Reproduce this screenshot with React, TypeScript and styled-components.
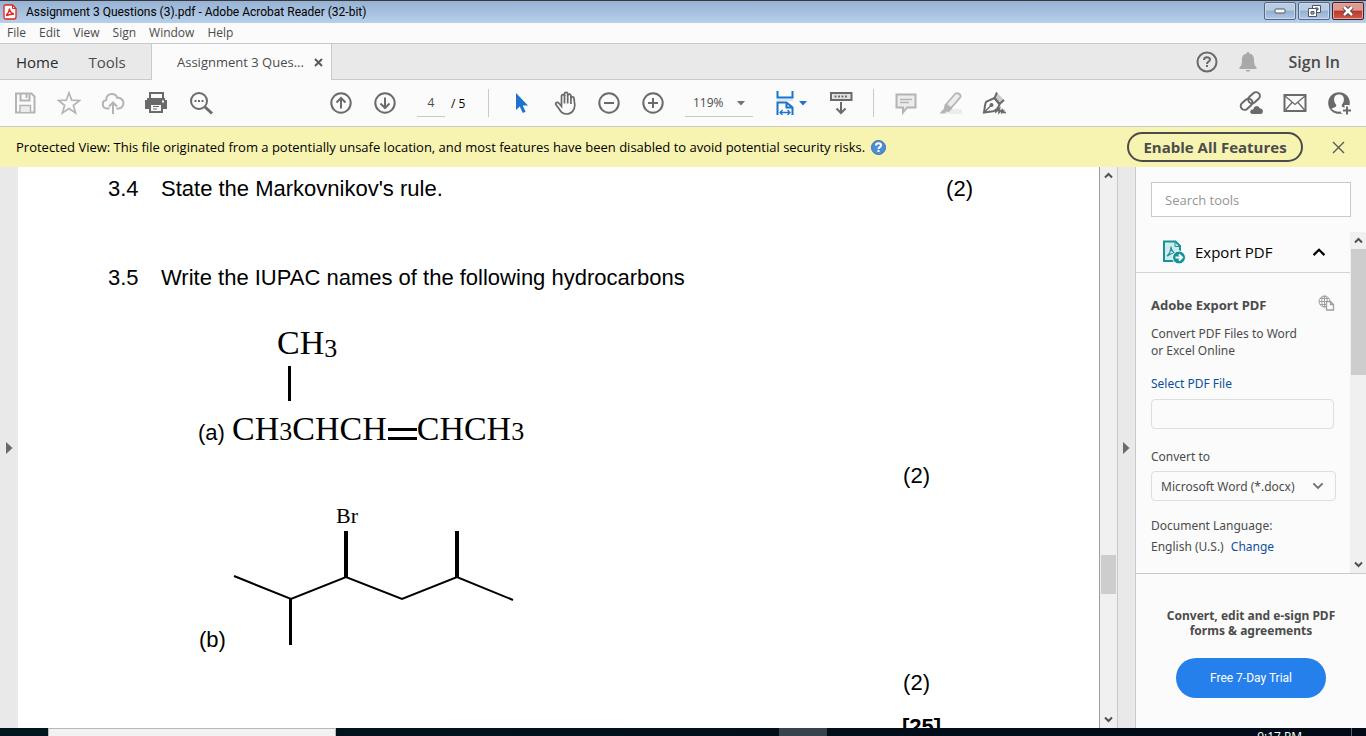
import React from "react";
import styled, { createGlobalStyle, css } from "styled-components";

const GlobalStyle = createGlobalStyle`
  *, *::before, *::after { box-sizing: border-box; }
  body { margin: 0; font-family: "Open Sans", "Noto Sans", sans-serif; font-size: 12px; color: #4b4b4b; background: #fbfbfb; }
  button, input, select { font: inherit; color: inherit; }
  button { border: 0; padding: 0; background: none; cursor: pointer; }
  svg { display: block; flex: none; }
  a { color: #0d4f9e; text-decoration: none; }
  h1, h2, p { margin: 0; font-size: inherit; font-weight: inherit; }
`;

const Window = styled.div`
  display: flex;
  flex-direction: column;
  height: 100vh;
  overflow: hidden;
`;

/* Title bar */
const TitleBar = styled.header`
  display: flex;
  flex: none;
  align-items: center;
  gap: 9px;
  height: 23px;
  padding: 0 2px 0 3px;
  border-top: 1px solid #37383c;
  background: linear-gradient(#97b2d3, #b6cfea);
  color: #000;
`;

const Title = styled.h1`
  flex: 1;
  font-family: Roboto, "Open Sans", sans-serif;
  line-height: 22px;
  white-space: nowrap;
`;

const CaptionButtons = styled.div`
  display: flex;
  align-self: flex-start;
  gap: 2px;
  padding-top: 1px;
`;

const CaptionButton = styled.button<{ $close?: boolean }>`
  display: grid;
  place-items: center;
  width: 32px;
  height: 18px;
  border: 1px solid ${(p) => (p.$close ? "#4c1a22" : "#55688a")};
  border-radius: 2px;
  box-shadow: inset 0 0 0 1px ${(p) => (p.$close ? "#e2a79f" : "#c9d9ec")};
  background: ${(p) =>
    p.$close
      ? "linear-gradient(#dd9a90 0 45%, #b8392a 50%, #c9604c)"
      : "linear-gradient(#b9cce4 0 45%, #94aecf 50%, #b1c8e4)"};
`;

/* Menu bar */
const MenuBar = styled.nav`
  display: flex;
  flex: none;
  gap: 13px;
  height: 20px;
  padding: 0 7px;
  line-height: 20px;
`;

/* Document tabs */
const TabBar = styled.div`
  display: flex;
  flex: none;
  height: 37px;
  border-top: 1px solid #c9c9c9;
  background: #e9e9e9;
`;

const TabGroup = styled.div`
  display: flex;
  align-items: center;
  gap: 30px;
  width: 151px;
  padding-left: 16px;
  border-bottom: 1px solid #c9c9c9;
  font-size: 15px;
`;

const TabLink = styled.button<{ $strong?: boolean }>`
  color: ${(p) => (p.$strong ? "#2c2c2c" : "#4b4b4b")};
`;

const DocumentTab = styled.div`
  display: flex;
  align-items: center;
  justify-content: space-between;
  width: 181px;
  padding: 0 8px 0 25px;
  border: solid #c9c9c9;
  border-width: 0 1px;
  background: #fbfbfb;
  font-size: 13px;
`;

const TabEnd = styled.div`
  display: flex;
  flex: 1;
  align-items: center;
  justify-content: flex-end;
  gap: 20px;
  padding-right: 26px;
  border-bottom: 1px solid #c9c9c9;
`;

const SignIn = styled.button`
  margin-left: 11px;
  font-size: 16px;
  font-weight: 600;
`;

/* Toolbar */
const Toolbar = styled.div`
  display: flex;
  flex: none;
  align-items: center;
  height: 47px;
  padding: 0 5px 0 3px;
  border-bottom: 1px solid #c8c8cc;
  color: #6a6a6a;
`;

const ToolButton = styled.button<{ $dim?: boolean; $wide?: boolean }>`
  display: flex;
  flex: none;
  align-items: center;
  justify-content: center;
  gap: 5px;
  width: ${(p) => (p.$wide ? 56 : 44)}px;
  height: 32px;
  color: ${(p) => (p.$dim ? "#b4b4b4" : "inherit")};
`;

const Gap = styled.div<{ $grow?: boolean }>`
  width: 96px;
  ${(p) => p.$grow && css`flex: 1;`}
`;

const Divider = styled.div`
  width: 1px;
  height: 28px;
  margin: 0 10px;
  background: #c9c9c9;
`;

const PageField = styled.label`
  display: flex;
  align-items: center;
  gap: 6px;
  width: 61px;
  margin-left: 10px;
  color: #000;
`;

const PageInput = styled.input`
  width: 28px;
  height: 28px;
  padding: 0;
  border: 0;
  border-bottom: 1px solid #c9c9c9;
  background: none;
  color: #4b4b4b;
  text-align: center;
`;

const ZoomField = styled.div`
  display: flex;
  position: relative;
  align-items: center;
  margin: 0 10px;
`;

const ZoomSelect = styled.select`
  width: 68px;
  height: 28px;
  padding: 0 8px;
  border: 0;
  border-bottom: 1px solid #c9c9c9;
  appearance: none;
  background: none;
  color: #4b4b4b;
`;

const SelectMark = styled.span<{ $right: number }>`
  position: absolute;
  right: ${(p) => p.$right}px;
  color: #707070;
  pointer-events: none;
`;

/* Protected view notice */
const Notice = styled.div`
  display: flex;
  flex: none;
  align-items: center;
  gap: 6px;
  height: 40px;
  padding: 0 20px 0 16px;
  background: #f7f3b1;
  color: #000;
  font-size: 13px;
`;

const EnableButton = styled.button`
  width: 176px;
  height: 30px;
  margin: 0 22px 0 auto;
  border: 2px solid #4b4b4b;
  border-radius: 15px;
  color: #4b4b4b;
  font-size: 15px;
  font-weight: 700;
  line-height: 20px;
`;

/* Work area */
const Workspace = styled.main`
  display: flex;
  flex: 1;
  min-height: 0;
`;

const PaneToggle = styled.button<{ $right?: boolean }>`
  display: grid;
  flex: none;
  place-items: center;
  width: 18px;
  background: #e9e9e9;
  ${(p) => p.$right && css`
    width: 19px;
    border: solid #c9c9c9;
    border-width: 0 1px;
  `}
`;

const Page = styled.article`
  flex: 1;
  min-width: 0;
  padding: 9px 126px 0 90px;
  overflow: hidden;
  background: #fff;
  color: #000;
  font: 22px/26px "Liberation Sans", Arial, sans-serif;
`;

const Question = styled.section`
  display: grid;
  grid-template-columns: 53px 1fr auto;
  margin-bottom: 63px;

  & + & { margin-bottom: 33px; }
`;

const Formula = styled.div`
  padding-left: 90px;
  font: 34px/38px "Liberation Serif", "Times New Roman", serif;
`;

const FormulaLine = styled.div<{ $indent?: boolean }>`
  display: flex;
  align-items: baseline;
  padding-left: ${(p) => (p.$indent ? 79 : 0)}px;
`;

const Count = styled.span<{ $sub?: boolean }>`
  font-size: 26px;
  line-height: 26px;
  ${(p) => p.$sub && css`
    position: relative;
    top: 3px;
  `}
`;

const SingleBond = styled.svg`
  margin: 4px 0 9px 89px;
`;

const PartLabel = styled.span`
  width: 34px;
  font: 22px/26px "Liberation Sans", Arial, sans-serif;
`;

const Marks = styled.p`
  margin: 15px 43px 11px 0;
  text-align: right;
`;

const Skeleton = styled.div`
  display: flex;
  align-items: flex-end;
  padding-left: 91px;
  margin-bottom: 17px;
`;

const Total = styled.p`
  margin: 18px 32px 0 0;
  font-weight: 700;
  text-align: right;
`;

/* Scroll bars */
const ScrollTrack = styled.div<{ $edge?: boolean }>`
  display: flex;
  flex: none;
  flex-direction: column;
  align-items: center;
  width: ${(p) => (p.$edge ? 18 : 16)}px;
  border-left: ${(p) => (p.$edge ? "1px solid #9c9c9c" : "0")};
  background: #f0f0f0;
  color: #505050;
`;

const ScrollSpace = styled.div<{ $share: number }>`
  flex: ${(p) => p.$share} 1 0;
`;

const ScrollThumb = styled.div<{ $size: number }>`
  flex: none;
  width: 15px;
  height: ${(p) => p.$size}px;
  background: #cdcdcd;
`;

const ScrollArrow = styled.button`
  display: grid;
  place-items: center;
  width: 15px;
  height: 17px;
`;

/* Tools pane */
const ToolsPane = styled.aside`
  display: flex;
  flex: none;
  flex-direction: column;
  width: 230px;
  background: #fbfbfb;
  font-family: "Noto Sans", "Open Sans", sans-serif;
`;

const SearchInput = styled.input`
  width: 200px;
  height: 35px;
  margin: 15px 15px 15px;
  padding: 0 13px;
  border: 1px solid #c9c9c9;
  background: #fff;
  font-family: "Open Sans", sans-serif;
  font-size: 13px;

  &::placeholder { color: #959595; opacity: 1; }
`;

const PaneScroll = styled.div`
  display: flex;
  flex: 1;
  min-height: 0;
`;

const PaneContent = styled.div`
  flex: 1;
  min-width: 0;
`;

const ToolHeader = styled.button`
  display: flex;
  align-items: center;
  gap: 9px;
  width: 100%;
  height: 41px;
  padding: 0 24px 0 26px;
  border-bottom: 1px solid #d3d3d3;
  color: #000;
  font-family: "Open Sans", sans-serif;
  font-size: 15px;
  text-align: left;

  span { flex: 1; }
`;

const ExportForm = styled.form`
  display: flex;
  flex-direction: column;
  padding: 22px 15px 0 15px;
  line-height: 17px;
`;

const FormHeading = styled.div`
  display: flex;
  justify-content: space-between;
  margin-bottom: 11px;

  h2 { padding-top: 2px; font-size: 13px; font-weight: 700; line-height: 17px; }
`;

const FileLabel = styled.label`
  margin: 16px 0 7px;
  color: #0d4f9e;
`;

const FileInput = styled.input`
  width: 183px;
  height: 30px;
  border: 1px solid #dedede;
  border-radius: 4px;
  background: none;
`;

const FormatLabel = styled.label`
  margin: 19px 0 6px;
`;

const FormatField = styled.div`
  display: flex;
  position: relative;
  align-items: center;
`;

const FormatSelect = styled.select`
  flex: none;
  width: 185px;
  height: 30px;
  padding: 0 9px;
  border: 1px solid #dedede;
  border-radius: 4px;
  appearance: none;
  background: none;
`;

const Language = styled.p`
  margin-top: 14px;
  line-height: 21px;

  a { margin-left: 4px; }
`;

const Promo = styled.div`
  display: flex;
  flex: none;
  flex-direction: column;
  align-items: center;
  gap: 20px;
  height: 155px;
  padding-top: 34px;
  border-top: 1px solid #c9c9c9;
  font-weight: 700;
  line-height: 15px;
  text-align: center;
`;

const TrialButton = styled.button`
  width: 150px;
  height: 40px;
  border-radius: 20px;
  background: #2680eb;
  color: #fff;
  font-family: Roboto, "Open Sans", sans-serif;
  font-weight: 400;
`;

/* Desktop task bar */
const TaskBar = styled.footer`
  display: flex;
  flex: none;
  height: 8px;
  overflow: hidden;
  background: linear-gradient(90deg, #00161f, #020a18);
`;

const TaskSearch = styled.div`
  width: 288px;
  margin-left: 48px;
  border: 1px solid #b8b8b8;
  border-bottom: 0;
  background: #f2f2f2;
`;

const TaskItem = styled.div`
  width: 48px;
  margin-left: 443px;
  background: #36424c;
`;

const Clock = styled.time`
  margin: 0 14px 0 auto;
  padding-right: 49px;
  border-right: 1px solid #5d636d;
  color: #fff;
  line-height: 18px;
`;

const Stroke = ({ size = 24, width = 2, children }: { size?: number; width?: number; children: React.ReactNode }) => (
  <svg width={size} height={size} viewBox="0 0 24 24" fill="none" stroke="currentColor" strokeWidth={width} aria-hidden="true">
    {children}
  </svg>
);

const Chevron = ({ up, size = 9, width = 2 }: { up?: boolean; size?: number; width?: number }) => (
  <svg width={size} height={size} viewBox="0 0 9 9" fill="none" stroke="currentColor" strokeWidth={width} aria-hidden="true">
    <path d={up ? "M1 6.5 4.5 3 8 6.5" : "M1 2.5 4.5 6 8 2.5"} />
  </svg>
);

const Caret = () => (
  <svg width="8" height="5" viewBox="0 0 8 5" fill="currentColor" aria-hidden="true">
    <path d="M0 0h8L4 4.5z" />
  </svg>
);

const PaneArrow = () => (
  <svg width="7" height="12" viewBox="0 0 7 12" fill="#6a6a6a" aria-hidden="true">
    <path d="M0 0 6.5 6 0 12z" />
  </svg>
);

const SaveIcon = () => (
  <Stroke>
    <path d="M3 2.5h15.5l3 3v16H3z" />
    <path d="M7.5 3v6.5h9V3" />
    <path d="M13.5 3v4" />
    <path fill="#ececec" strokeWidth="1.5" d="M7 21v-6.500h10.500V21" />
  </Stroke>
);

const StarIcon = () => (
  <Stroke width={1.7}>
    <path d="m12 1.800 2.700 7.400 7.900.300-6.200 4.900 2.200 7.600-6.600-4.400L5.400 22l2.200-7.600-6.200-4.900 7.900-.300z" />
  </Stroke>
);

const CloudUpIcon = () => (
  <Stroke>
    <path d="M8.500 17.500H5.800a4.300 4.300 0 0 1-.6-8.500C4.800 5.500 7.500 3 10.800 3c2.800 0 4.700 1.500 5.500 3.800a5.400 5.400 0 1 1 1.500 10.700h-2.500" />
    <path d="M12 23V11.500m-4 4 4-4 4 4" />
  </Stroke>
);

const PrintIcon = () => (
  <svg width="24" height="24" viewBox="0 0 24 24" aria-hidden="true">
    <path fill="none" stroke="#6a6a6a" strokeWidth="2" d="M5 8V2h13v6" />
    <path fill="#6a6a6a" d="M0 9h2V7h18v2h2v9h-4v4H4v-4H0z" />
    <path fill="#fbfbfb" d="M17 9.500h2v2h-2zM6 14h10v6H6z" />
    <path stroke="#6a6a6a" d="M8 15.500h6m-6 2.500h4" />
  </svg>
);

const FindIcon = () => (
  <Stroke>
    <circle cx="10" cy="10" r="8" />
    <path strokeWidth="3" d="m16 16 7 6.500" />
    <path strokeWidth="2" d="M5.500 10h2m1.500 0h2m1.500 0h2" />
  </Stroke>
);

const ArrowCircle = ({ down }: { down?: boolean }) => (
  <Stroke>
    <circle cx="12" cy="12" r="9.700" />
    {down ? <path d="M12 6.500v10.500M7.500 12.500 12 17l4.500-4.500" /> : <path d="M12 17.500V7m-4.500 4.500L12 7l4.500 4.500" />}
  </Stroke>
);

const SignCircle = ({ plus }: { plus?: boolean }) => (
  <Stroke>
    <circle cx="12" cy="12" r="9.700" />
    <path d={plus ? "M7 12h10M12 7v10" : "M7 12h10"} />
  </Stroke>
);

const PointerIcon = () => (
  <svg width="24" height="24" viewBox="0 0 24 24" fill="#1b73cd" aria-hidden="true">
    <path d="M7 2v17l3.800-3.600 3 6.600 2.800-1.300-2.900-6.200H19z" />
  </svg>
);

const HandIcon = () => (
  <Stroke width={1.7}>
    <path d="M7.500 12.500V5.300c0-2.300 3-2.300 3 0V3.200c0-2.400 3.200-2.400 3.200 0v1.600c0-2.300 3.200-2.300 3.200 0v2.600c0-2 3.100-2 3.100 0l.8 6.600c0 5-3 9-8.500 9-4 0-5.800-2.500-7.100-5L2 13.800c-1-2.200 1.500-3.500 3-1.500l2.500 3z" transform="translate(1)" />
    <path d="M11.500 4v8.500m3.200-8.500v8.500m3.200-7v7.500" />
  </Stroke>
);

const FitWidthIcon = () => (
  <svg width="18" height="24" viewBox="0 0 18 24" fill="none" stroke="#1b73cd" strokeWidth="2" aria-hidden="true">
    <path d="M1.500 0v6.500h15V0" />
    <path stroke="#d8e5f3" d="M1 9h16" />
    <path d="M1.500 24V11.500h9l6 5V24M10.500 11.500v5h6" />
    <path strokeWidth="1.300" d="M4 21.500h10M6.500 19 4 21.500 6.500 24m5-5 2.500 2.500-2.500 2.500" />
  </svg>
);

const KeyboardDownIcon = () => (
  <Stroke>
    <path fill="#e4e4e4" d="M2 2h20.500v7H2z" />
    <path strokeDasharray="2 1.500" d="M5.500 5.500h13.500" />
    <path d="M12 11v11m-4.500-4.500L12 22l4.500-4.500" />
  </Stroke>
);

const CommentIcon = () => (
  <Stroke>
    <path fill="#ececec" d="M2.500 3.500h19v13H13L9 21.500v-5H2.500z" />
    <path strokeWidth="1.300" d="M6 8.500h12M6 11.500h9" />
  </Stroke>
);

const HighlightIcon = () => (
  <Stroke width={1.700}>
    <path stroke="none" fill="#ececec" d="M7 18h17v5H7z" />
    <path fill="#ececec" d="M8 13.500 17 3c2-2 6 0 5.500 3L13 17z" />
    <path fill="#b4b4b4" d="m7.500 14 5.500 3.500-2 2.500H6z" />
    <path fill="#b4b4b4" stroke="none" d="M1.500 22.500 5 18.500l3 2.500-1.500 1.500z" />
  </Stroke>
);

const SignPenIcon = () => (
  <Stroke>
    <path d="M2 21.500C3 17 2.500 12.500 4.500 10.500L12.500 7l5 6c-1 4-3.500 6.500-6.500 7.200z" />
    <path strokeWidth="1.500" d="m2 21.500 7-7" />
    <path stroke="none" fill="#c9c9c9" d="m15 2 7 6.500-3.500 3.500-6-5.500z" />
    <path d="m15 1.500-2.500 5.500 5 6 4.500-4" />
    <circle cx="9.500" cy="14" r="1" />
    <path strokeWidth="1.700" d="m13 21.500 4.500-4-.5 4 3-2.500v2.500l1.500-1.500v1.500H24" />
  </Stroke>
);

const LinkCloudIcon = () => (
  <Stroke>
    <rect x="8.500" y="3" width="13" height="7.500" rx="3.700" transform="rotate(-42 15 6.700)" />
    <rect x="1" y="9.500" width="13" height="7.500" rx="3.700" transform="rotate(-42 7.500 13.200)" />
    <path stroke="#fbfbfb" strokeWidth="1" fill="#6a6a6a" d="M14 23.500c-4.500 0-4-5.500 0-5.500 1-4.500 6-4 7-1 4.500 0 4.500 6.500 0 6.500z" />
  </Stroke>
);

const MailIcon = () => (
  <Stroke>
    <path d="M1.500 4h21v16h-21z" />
    <path strokeWidth="1.300" d="m2 5 10 8.500L22 5M2 19.500l7-8m13 8-7-8" />
  </Stroke>
);

const PersonAddIcon = () => (
  <svg width="24" height="24" viewBox="0 0 24 24" aria-hidden="true">
    <circle cx="12" cy="12" r="9.800" fill="#6a6a6a" stroke="#6a6a6a" strokeWidth="2" />
    <path fill="#fbfbfb" d="M12 3.500c3.500 0 5 2.200 4.900 5.200-.1 2-.9 3.700-2.100 5v1.800l4.700 2.200c-4 4-11 4-15 0L9.200 15.500v-1.800C8 12.400 7.200 10.700 7.100 8.700 7 5.700 8.500 3.500 12 3.500z" />
    <path stroke="#fbfbfb" strokeWidth="5" d="M20 14v10m-6-4.500h10" />
    <path stroke="#6a6a6a" strokeWidth="2" d="M20 15.500v8m-4-4h8" />
  </svg>
);

const AcrobatIcon = () => (
  <svg width="14" height="16" viewBox="0 0 14 16" fill="none" stroke="#e2231a" aria-hidden="true">
    <path fill="#fff" strokeWidth="1.300" d="M2.500 1h7L13 4.500V13q0 2-2 2H3q-2 0-2-2V2.500Q1 1 2.500 1z" />
    <path d="M9.500 1v3.500H13" />
    <path strokeWidth="1.300" d="M6.500 4.500c-.3 3-1.500 5.500-3.500 7M6.500 5c.5 2.500 2 4.500 4.500 5-2.500 0-5 .500-7.500 1.700" />
  </svg>
);

const ExportIcon = () => (
  <svg width="24" height="24" viewBox="0 0 24 24" fill="none" stroke="#15939a" aria-hidden="true">
    <path fill="#d2eaeb" strokeWidth="2" d="M2 1.500h11.500l4.500 4.500v15H2z" />
    <path d="M13 2v4.500h4.500" />
    <path strokeWidth="1.200" d="M9 6.500c0 4-1.500 7.500-4 9.500M9 7c.5 4 2.500 6 5.500 6-4 0-6.500.500-9 3" />
    <circle cx="17" cy="17.500" r="6.500" fill="#15939a" stroke="#fbfbfb" />
    <path stroke="#fff" strokeWidth="2" d="M13.500 17.500h6m-2.500-3 3 3-3 3" />
  </svg>
);

const WebFileIcon = () => (
  <svg width="17" height="17" viewBox="0 0 17 17" fill="none" stroke="#a0a0a0" aria-hidden="true">
    <circle cx="6.500" cy="6.500" r="5.500" />
    <path d="M6.500 1v11M1 6.500h11M2 3.500h9M2 9.500h9" />
    <ellipse cx="6.500" cy="6.500" rx="2.800" ry="5.500" />
    <path fill="#fbfbfb" strokeWidth="1.300" d="M8.500 6.500h4l3 3v5.500h-7zM12.500 6.500v3h3" />
  </svg>
);

const MENUS = ["File", "Edit", "View", "Sign", "Window", "Help"];

export default function App() {
  return (
    <Window>
      <GlobalStyle />
      <TitleBar>
        <AcrobatIcon />
        <Title>Assignment 3 Questions (3).pdf - Adobe Acrobat Reader (32-bit)</Title>
        <CaptionButtons>
          <CaptionButton aria-label="Minimize">
            <svg width="12" height="6" viewBox="0 0 12 6"><rect x="1" y="1" width="10" height="4" rx="1" fill="#fff" stroke="#4e5462" /></svg>
          </CaptionButton>
          <CaptionButton aria-label="Restore">
            <svg width="13" height="12" viewBox="0 0 13 12" fill="none" stroke="#4e5462">
              <path fill="#fff" d="M4.500.500h8v7h-8z" />
              <path fill="#94aecf" d="M7 3h3v2H7z" />
              <path fill="#fff" d="M.5 3.500h8v8h-8z" />
              <path fill="#94aecf" d="M3 6.500h3v2.500H3z" />
            </svg>
          </CaptionButton>
          <CaptionButton $close aria-label="Close">
            <svg width="12" height="10" viewBox="0 0 12 10">
              <path stroke="#4e3b44" strokeWidth="4.500" d="m2 1 8 8m0-8L2 9" />
              <path stroke="#fff" strokeWidth="2.500" d="m2 1 8 8m0-8L2 9" />
            </svg>
          </CaptionButton>
        </CaptionButtons>
      </TitleBar>

      <MenuBar aria-label="Menu bar">
        {MENUS.map((menu) => <button key={menu}>{menu}</button>)}
      </MenuBar>

      <TabBar>
        <TabGroup>
          <TabLink $strong>Home</TabLink>
          <TabLink>Tools</TabLink>
        </TabGroup>
        <DocumentTab>
          <span>Assignment 3 Ques...</span>
          <button aria-label="Close tab">
            <svg width="9" height="9" viewBox="0 0 9 9" stroke="#5a5a5a" strokeWidth="2"><path d="m1 1 7 7m0-7L1 8" /></svg>
          </button>
        </DocumentTab>
        <TabEnd>
          <button aria-label="Help">
            <svg width="22" height="22" viewBox="0 0 22 22" fill="none" stroke="#6a6a6a" strokeWidth="2">
              <circle cx="11" cy="11" r="9.500" />
              <path d="M8 9c0-3.500 6-3.500 6-.5 0 2-3 2-3 4.500m0 1v2" />
            </svg>
          </button>
          <button aria-label="Notifications">
            <svg width="20" height="20" viewBox="0 0 20 20" fill="#a9a9a9">
              <path d="M9 0h2v1.500c3.500.5 5 3 5 6 0 4 .5 6 2.500 8V17h-17v-1.500c2-2 2.500-4 2.500-8 0-3 1.500-5.500 5-6zM7.500 18h5c-.5 2-4.500 2-5 0z" />
            </svg>
          </button>
          <SignIn>Sign In</SignIn>
        </TabEnd>
      </TabBar>

      <Toolbar>
        <ToolButton $dim aria-label="Save"><SaveIcon /></ToolButton>
        <ToolButton $dim aria-label="Star"><StarIcon /></ToolButton>
        <ToolButton $dim aria-label="Upload"><CloudUpIcon /></ToolButton>
        <ToolButton aria-label="Print"><PrintIcon /></ToolButton>
        <ToolButton aria-label="Find"><FindIcon /></ToolButton>
        <Gap />
        <ToolButton aria-label="Previous page"><ArrowCircle /></ToolButton>
        <ToolButton aria-label="Next page"><ArrowCircle down /></ToolButton>
        <PageField>
          <PageInput aria-label="Page number" defaultValue="4" />
          / 5
        </PageField>
        <Divider />
        <ToolButton aria-label="Select"><PointerIcon /></ToolButton>
        <ToolButton aria-label="Pan"><HandIcon /></ToolButton>
        <ToolButton aria-label="Zoom out"><SignCircle /></ToolButton>
        <ToolButton aria-label="Zoom in"><SignCircle plus /></ToolButton>
        <ZoomField>
          <ZoomSelect aria-label="Zoom level" defaultValue="119%"><option>119%</option></ZoomSelect>
          <SelectMark $right={8}><Caret /></SelectMark>
        </ZoomField>
        <ToolButton $wide aria-label="Fit width">
          <FitWidthIcon />
          <svg width="8" height="5" viewBox="0 0 8 5" fill="#1b73cd"><path d="M0 0h8L4 4.500z" /></svg>
        </ToolButton>
        <ToolButton aria-label="Scroll mode"><KeyboardDownIcon /></ToolButton>
        <Divider />
        <ToolButton $dim aria-label="Comment"><CommentIcon /></ToolButton>
        <ToolButton $dim aria-label="Highlight"><HighlightIcon /></ToolButton>
        <ToolButton aria-label="Sign"><SignPenIcon /></ToolButton>
        <Gap $grow />
        <ToolButton aria-label="Share link"><LinkCloudIcon /></ToolButton>
        <ToolButton aria-label="Email"><MailIcon /></ToolButton>
        <ToolButton aria-label="Add people"><PersonAddIcon /></ToolButton>
      </Toolbar>

      <Notice role="status">
        <span>
          Protected View: This file originated from a potentially unsafe location, and most features have been disabled to avoid potential security risks.
        </span>
        <button aria-label="About Protected View">
          <svg width="15" height="15" viewBox="0 0 15 15" fill="none">
            <circle cx="7.500" cy="7.500" r="7" fill="#4d8fd6" stroke="#3b6fb5" />
            <path stroke="#fff" strokeWidth="2" d="M5 5.500c0-3 5-3 5 0 0 1.700-2.500 1.500-2.500 3.500m0 1v2" />
          </svg>
        </button>
        <EnableButton>Enable All Features</EnableButton>
        <button aria-label="Dismiss">
          <svg width="15" height="15" viewBox="0 0 15 15" stroke="#5a5a5a" strokeWidth="1.400"><path d="m2 2 11 11m0-11L2 13" /></svg>
        </button>
      </Notice>

      <Workspace>
        <PaneToggle aria-label="Show navigation pane"><PaneArrow /></PaneToggle>
        <Page>
          <Question>
            <span>3.4</span>
            <span>State the Markovnikov's rule.</span>
            <span>(2)</span>
          </Question>
          <Question>
            <span>3.5</span>
            <span>Write the IUPAC names of the following hydrocarbons</span>
          </Question>

          <Formula>
            <FormulaLine $indent>CH<Count $sub>3</Count></FormulaLine>
            <SingleBond width="4" height="35" viewBox="0 0 4 35"><path stroke="#000" strokeWidth="3" d="M2.500 0v35" /></SingleBond>
            <FormulaLine>
              <PartLabel>(a)</PartLabel>
              CH<Count>3</Count>CHCH
              <svg width="30" height="12" viewBox="0 0 30 12"><path stroke="#000" strokeWidth="3" d="M1 1.500H30M1 10.500H30" /></svg>
              CHCH<Count>3</Count>
            </FormulaLine>
          </Formula>
          <Marks>(2)</Marks>

          <Skeleton>
            <PartLabel>(b)</PartLabel>
            <svg width="284" height="153" viewBox="0 0 284 153" fill="none" stroke="#000" role="img" aria-label="Skeletal formula with a bromine substituent">
              <text x="103" y="23" fill="#000" stroke="none" fontFamily="Liberation Serif, serif" fontSize="22">Br</text>
              <path strokeWidth="4" d="M113 31v46M224 31v46" />
              <path strokeWidth="3" d="M57.500 99v46" />
              <path strokeWidth="2" d="m1 76 57 23 55-22 56 22 55-22 56 23" />
            </svg>
          </Skeleton>
          <Marks>(2)</Marks>
          <Total>[25]</Total>
        </Page>

        <ScrollTrack $edge>
          <ScrollArrow aria-label="Scroll up"><Chevron up /></ScrollArrow>
          <ScrollSpace $share={371} />
          <ScrollThumb $size={39} />
          <ScrollSpace $share={117} />
          <ScrollArrow aria-label="Scroll down"><Chevron /></ScrollArrow>
        </ScrollTrack>
        <PaneToggle $right aria-label="Hide tools pane"><PaneArrow /></PaneToggle>

        <ToolsPane>
          <SearchInput type="text" placeholder="Search tools" aria-label="Search tools" />
          <PaneScroll>
            <PaneContent>
              <ToolHeader>
                <ExportIcon />
                <span>Export PDF</span>
                <Chevron up size={14} width={1.4} />
              </ToolHeader>
              <ExportForm>
                <FormHeading>
                  <h2>Adobe Export PDF</h2>
                  <WebFileIcon />
                </FormHeading>
                <p>Convert PDF Files to Word<br />or Excel Online</p>
                <FileLabel htmlFor="pdf-file">Select PDF File</FileLabel>
                <FileInput id="pdf-file" type="text" />
                <FormatLabel htmlFor="format">Convert to</FormatLabel>
                <FormatField>
                  <FormatSelect id="format" defaultValue="docx">
                    <option value="docx">Microsoft Word (*.docx)</option>
                  </FormatSelect>
                  <SelectMark $right={11}><Chevron size={12} width={1.4} /></SelectMark>
                </FormatField>
                <Language>
                  Document Language:<br />
                  English (U.S.) <a href="#language">Change</a>
                </Language>
              </ExportForm>
            </PaneContent>
            <ScrollTrack>
              <ScrollArrow aria-label="Scroll up"><Chevron up /></ScrollArrow>
              <ScrollThumb $size={126} />
              <ScrollSpace $share={1} />
              <ScrollArrow aria-label="Scroll down"><Chevron /></ScrollArrow>
            </ScrollTrack>
          </PaneScroll>
          <Promo>
            <p>Convert, edit and e-sign PDF<br />forms &amp; agreements</p>
            <TrialButton>Free 7-Day Trial</TrialButton>
          </Promo>
        </ToolsPane>
      </Workspace>

      <TaskBar>
        <TaskSearch />
        <TaskItem />
        <Clock>9:17 PM</Clock>
      </TaskBar>
    </Window>
  );
}
